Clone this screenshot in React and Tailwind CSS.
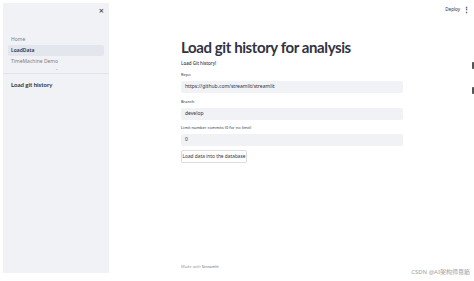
export default function App() {
  return (
    <div
      className="relative flex h-[281px] w-[474px] overflow-hidden bg-white text-[#31333f]"
      style={{ fontFamily: '"Noto Sans", "Noto Sans CJK SC", sans-serif' }}
    >
      {/* Sidebar */}
      <div className="ml-[3px] mt-[3px] flex h-[270px] w-[106px] flex-col bg-[#f0f2f6]">
        <div className="flex justify-end pr-[5px] pt-[3px] text-[9px] leading-none text-[#31333f]">×</div>
        <div className="mt-[19px] flex flex-col px-[5px] text-[5px]">
          <div className="flex h-[11px] items-center px-[3px] text-[#7c7f88]">Home</div>
          <div className="flex h-[11px] items-center rounded-[2px] bg-[#e3e6ec] px-[3px] font-semibold text-[#31333f]">LoadData</div>
          <div className="flex h-[11px] items-center px-[3px] text-[#7c7f88]">TimeMachine Demo</div>
          <div className="flex h-[5px] justify-center text-[4px] leading-none text-[#9a9ca5]">⌄</div>
        </div>
        <div className="mt-[1px] h-px bg-[#dfe2e8]" />
        <div
          className="pl-[8px] pt-[6px] text-[6px] font-bold text-[#31333f]"
          style={{ fontFamily: 'Lato, sans-serif' }}
        >
          Load git history
        </div>
      </div>

      {/* Main */}
      <div className="flex flex-1 flex-col pl-[72px] pr-[71px] pt-[36px]">
        <h1
          className="text-[15px] font-bold leading-[22px] tracking-[-0.4px] text-[#31333f]"
          style={{ fontFamily: 'Lato, sans-serif' }}
        >
          Load git history for analysis
        </h1>
        <div className="mt-[2px] text-[4.5px] font-medium leading-[6px]">Load Git history!</div>

        <div className="mt-[6px] text-[4px] leading-[6px]">Repo</div>
        <div className="mt-[3px] flex h-[12px] items-center rounded-[2px] bg-[#f0f2f6] px-[4px] text-[5px]">
          https://github.com/streamlit/streamlit
        </div>

        <div className="mt-[6px] text-[4px] leading-[6px]">Branch</div>
        <div className="mt-[3px] flex h-[12px] items-center rounded-[2px] bg-[#f0f2f6] px-[4px] text-[5px]">develop</div>

        <div className="mt-[5px] text-[4px] leading-[6px]">Limit number commits (0 for no limit)</div>
        <div className="mt-[3px] flex h-[12px] items-center rounded-[2px] bg-[#f0f2f6] px-[4px] text-[5px]">0</div>

        <div className="mt-[4px] flex h-[13px] w-[66px] items-center justify-center rounded-[2px] border border-[#dcdde2] bg-white text-[4.8px]">
          Load data into the database
        </div>

        <div className="mt-auto mb-[11px] text-[4px] text-[#9a9ca5]">
          Made with <span className="text-[#6b6f7a]">Streamlit</span>
        </div>
      </div>

      {/* Top-right toolbar */}
      <div className="absolute right-[4px] top-[6px] flex items-center gap-[3px] text-[4.5px] text-[#31333f]">
        <span>Deploy</span>
        <span className="text-[7px] font-bold leading-none">⋮</span>
      </div>

      {/* Right edge marks */}
      <div className="absolute right-0 top-[62px] h-[7px] w-[2px] rounded-l-[1px] bg-[#555]" />
      <div className="absolute right-0 top-[87px] h-[7px] w-[2px] rounded-l-[1px] bg-[#555]" />

      {/* Watermark */}
      <div className="absolute bottom-[4px] right-[4px] text-[6px] text-[#a0a2a8]">CSDN @AI架构师易筋</div>
    </div>
  );
}
